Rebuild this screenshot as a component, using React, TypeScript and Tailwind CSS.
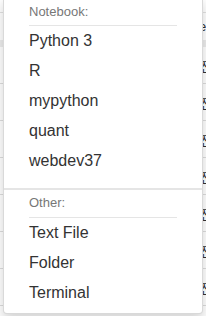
import React from 'react';

const NOTEBOOKS = ['Python 3', 'R', 'mypython', 'quant', 'webdev37'];
const OTHERS = ['Text File', 'Folder', 'Terminal'];

function MenuHeader({ label }: { label: string }) {
  return (
    <div className="h-[20px] pl-[25px] text-[13px] leading-[20px] text-[#777]">{label}</div>
  );
}

function MenuItem({ label }: { label: string }) {
  return (
    <div className="h-[30px] pl-[25px] text-[16px] leading-[30px] text-[#333] whitespace-nowrap">
      {label}
    </div>
  );
}

function App() {
  const rows = Array.from({ length: 7 });

  return (
    <div
      className="relative w-[206px] h-[316px] overflow-hidden bg-white"
      style={{ fontFamily: '"Liberation Sans", Arial, sans-serif' }}
    >
      {/* page behind the menu */}
      <div className="flex h-full">
        <div className="w-[3px] bg-[#ececec]" />
        <div className="flex-1 flex flex-col">
          <div className="h-[13px] border-b border-[#e2e2e2]" />
          <div className="h-[27px] pl-[199px] text-[13px] leading-[27px] text-[#333] whitespace-nowrap">ed</div>
          <div className="h-[7px] bg-[#ececec]" />
          {rows.map((_, i) => (
            <div
              key={i}
              className="h-[37px] border-b border-[#ddd] pl-[200px] text-[13px] leading-[37px] text-[#333] whitespace-nowrap"
              style={{ fontFamily: '"Noto Sans CJK KR", sans-serif' }}
            >
              전
            </div>
          ))}
        </div>
      </div>

      {/* dropdown menu */}
      <div className="absolute left-[3px] top-[-4px] w-[200px] rounded-[4px] border border-[rgba(0,0,0,0.15)] bg-white pt-[5px] pb-[5px] shadow-[0_6px_12px_rgba(0,0,0,0.175)]">
        <MenuHeader label="Notebook:" />
        <div className="mt-[3px] ml-[25px] h-px w-[148px] bg-[#e5e5e5]" />
        {NOTEBOOKS.map((n) => (
          <MenuItem key={n} label={n} />
        ))}
        <div className="mt-[12px] h-[2px] bg-[#e5e5e5]" />
        <div className="mt-[3px]">
          <MenuHeader label="Other:" />
        </div>
        <div className="mt-[4px] ml-[25px] h-px w-[148px] bg-[#e5e5e5]" />
        {OTHERS.map((n) => (
          <MenuItem key={n} label={n} />
        ))}
      </div>
    </div>
  );
}

export default App;
